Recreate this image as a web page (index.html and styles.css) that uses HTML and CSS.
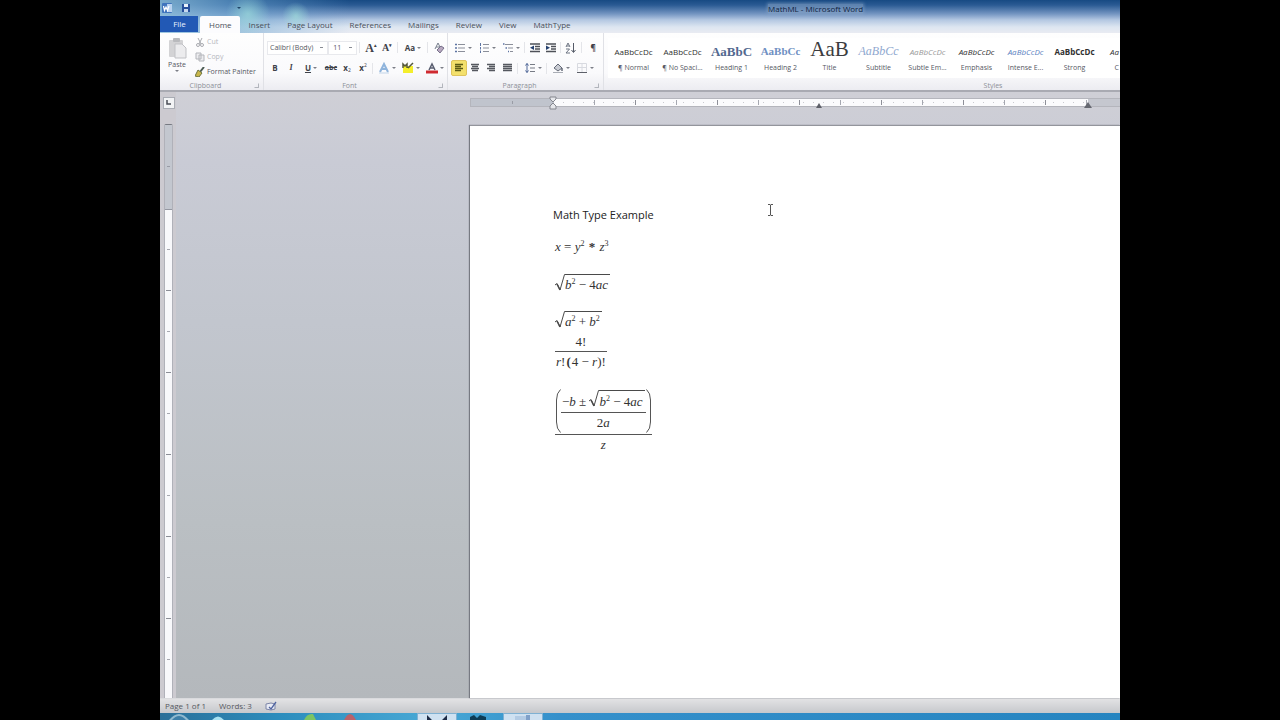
FILE: index.html
```html
<!DOCTYPE html>
<html lang="en">
<head>
<meta charset="utf-8">
<title>MathML - Microsoft Word</title>
<link rel="stylesheet" href="styles.css">
</head>
<body>
<div class="app">
  <header class="chrome">
    <div class="titlebar">
      <div class="quick">
        <svg class="word-logo" viewBox="0 0 12 12" width="12" height="12"><rect x="1" y="1" width="10" height="10" rx="1" fill="#3f74bd"/><path d="M6 2h5v8H6z" fill="#b9d2f0"/><path d="M2.500 4l1 4.500L5 5l1.500 3.500L8 4" fill="none" stroke="#fff" stroke-width="1.200"/></svg>
        <button class="qbtn" aria-label="Save"><svg viewBox="0 0 12 12" width="12" height="12"><path d="M2 2h8v8H2z" fill="#264f9c"/><path d="M4 2h4v3H4z" fill="#e9f1fb"/><path d="M4 7h4v3H4z" fill="#c6d8ef"/></svg></button>
        <button class="qbtn more" aria-label="Customize Quick Access Toolbar"><i class="arrow"></i></button>
      </div>
      <h1 class="title">MathML - Microsoft Word</h1>
    </div>
    <nav class="tabs">
      <button class="tab file">File</button>
      <button class="tab active">Home</button>
      <button class="tab">Insert</button>
      <button class="tab">Page Layout</button>
      <button class="tab">References</button>
      <button class="tab">Mailings</button>
      <button class="tab">Review</button>
      <button class="tab">View</button>
      <button class="tab">MathType</button>
    </nav>
  </header>

  <section class="ribbon">
    <div class="group clipboard">
      <div class="group-body clip-body">
        <button class="paste"><svg viewBox="0 0 20 22" width="20" height="22"><rect x="2" y="3" width="14" height="17" rx="1" fill="#d3d3d5"/><rect x="6" y="1" width="7" height="4" rx="1" fill="#b9babd"/><path d="M8 7h7l4 4v10H8z" fill="#ececee" stroke="#c0c1c5"/></svg><span>Paste</span><i class="arrow"></i></button>
        <div class="clip-list">
          <button class="clip off"><svg viewBox="0 0 10 10" width="10" height="10"><path d="M3 1l3 6M7 1L4 7" stroke="#a9abb0" fill="none"/><circle cx="3" cy="8" r="1.500" fill="none" stroke="#a9abb0"/><circle cx="7" cy="8" r="1.500" fill="none" stroke="#a9abb0"/></svg>Cut</button>
          <button class="clip off"><svg viewBox="0 0 10 10" width="10" height="10"><path d="M1 1h5v6H1zM4 3h5v6H4z" fill="#ededf0" stroke="#b3b5ba"/></svg>Copy</button>
          <button class="clip"><svg viewBox="0 0 10 10" width="10" height="10"><path d="M9 0L5 5" stroke="#4b5a52" stroke-width="2"/><path d="M3 3l4 3-3 4-4-1z" fill="#c9b64a" stroke="#6d7440"/></svg>Format Painter</button>
        </div>
      </div>
      <div class="group-label"><span>Clipboard</span><button class="launcher" aria-label="Clipboard options"></button></div>
    </div>

    <div class="group font">
      <div class="group-body">
        <div class="tools">
          <select class="face" aria-label="Font"><option>Calibri (Body)</option></select>
          <select class="size" aria-label="Font size"><option>11</option></select>
          <i class="sep"></i>
          <button class="tool serif grow" aria-label="Grow font">A<sup>▴</sup></button>
          <button class="tool serif shrink" aria-label="Shrink font">A<sup>▾</sup></button>
          <i class="sep"></i>
          <button class="tool wide" aria-label="Change case"><b>Aa</b><i class="arrow"></i></button>
          <i class="sep"></i>
          <button class="tool" aria-label="Clear formatting"><svg viewBox="0 0 12 12" width="12" height="12"><path d="M2 7l3-6 3 6M3 5h4" stroke="#777e8c" fill="none"/><path d="M4 8l4-4 3 2-4 5z" fill="#b8a9c0" stroke="#77708a"/></svg></button>
        </div>
        <div class="tools">
          <button class="tool" aria-label="Bold"><b>B</b></button>
          <button class="tool serif" aria-label="Italic"><em>I</em></button>
          <button class="tool wide" aria-label="Underline"><u><b>U</b></u><i class="arrow"></i></button>
          <button class="tool" aria-label="Strikethrough"><s>abc</s></button>
          <button class="tool" aria-label="Subscript"><b>x</b><sub>2</sub></button>
          <button class="tool" aria-label="Superscript"><b>x</b><sup>2</sup></button>
          <i class="sep slim"></i>
          <button class="tool wide" aria-label="Text effects"><svg viewBox="0 0 12 12" width="12" height="12"><path d="M2 10l4-8 4 8M3.500 7h5" stroke="#8fb4dc" stroke-width="2" fill="none"/><path d="M1 11h10" stroke="#c1d4e8"/></svg><i class="arrow"></i></button>
          <button class="tool wide" aria-label="Highlight color"><svg viewBox="0 0 12 12" width="12" height="12"><path d="M1 4h10v7H1z" fill="#f4ee2c"/><path d="M1 6V2l2 2 2-2v4M6 6l5-5" stroke="#55583c" stroke-width="1.500" fill="none"/></svg><i class="arrow"></i></button>
          <button class="tool wide" aria-label="Font color"><svg viewBox="0 0 12 12" width="12" height="12"><path d="M3 8l3-6 3 6M4 6h4" stroke="#595e70" stroke-width="1.500" fill="none"/><path d="M0 8.500h12v3H0z" fill="#cf2a30"/></svg><i class="arrow"></i></button>
        </div>
      </div>
      <div class="group-label"><span>Font</span><button class="launcher" aria-label="Font options"></button></div>
    </div>

    <div class="group paragraph">
      <div class="group-body">
        <div class="tools">
          <button class="tool wide" aria-label="Bullets"><svg viewBox="0 0 12 12" width="12" height="12"><path d="M4 2.500h7M4 6h7M4 9.500h7" stroke="#8b8f9a"/><path d="M1 2.500h2M1 6h2M1 9.500h2" stroke="#5d74a3" stroke-width="1.500"/></svg><i class="arrow"></i></button>
          <button class="tool wide" aria-label="Numbering"><svg viewBox="0 0 12 12" width="12" height="12"><path d="M5 2.500h6M5 6h6M5 9.500h6" stroke="#8b8f9a"/><path d="M2.500 1v3M2.500 5v2.500M2.500 8.500V11" stroke="#5d74a3"/></svg><i class="arrow"></i></button>
          <button class="tool wide" aria-label="Multilevel list"><svg viewBox="0 0 12 12" width="12" height="12"><path d="M3 2.500h8M6 6h5M8 9.500h3" stroke="#8b8f9a"/><path d="M1 2h1.500M3.500 6H5M6 9.500h1" stroke="#5d74a3" stroke-width="1.500"/></svg><i class="arrow"></i></button>
          <i class="sep slim"></i>
          <button class="tool" aria-label="Decrease indent"><svg viewBox="0 0 12 12" width="12" height="12"><path d="M1 2h10M6 4.500h5M6 7h5M1 9.500h10" stroke="#4e5158" stroke-width="1.500"/><path d="M5 3.500v4.500L1 5.800z" fill="#25416f"/></svg></button>
          <button class="tool" aria-label="Increase indent"><svg viewBox="0 0 12 12" width="12" height="12"><path d="M1 2h10M6 4.500h5M6 7h5M1 9.500h10" stroke="#4e5158" stroke-width="1.500"/><path d="M1 3.500v4.500l4-2.200z" fill="#25416f"/></svg></button>
          <i class="sep slim"></i>
          <button class="tool" aria-label="Sort"><svg viewBox="0 0 12 12" width="12" height="12"><path d="M1 5l2-4 2 4M1.500 4h3M1 7h3.500L1 11h4" stroke="#6d7482" fill="none"/><path d="M8.500 1v9M6.500 8l2 2.500 2-2.500" stroke="#555b68" fill="none"/></svg></button>
          <i class="sep"></i>
          <button class="tool" aria-label="Show formatting marks"><b>¶</b></button>
        </div>
        <div class="tools">
          <button class="tool on" aria-label="Align left"><svg viewBox="0 0 12 12" width="12" height="12"><path d="M2 2.500h8M2 4.500h6M2 6.500h8M2 8.500h6" stroke="#5c5a14" stroke-width="1.500"/></svg></button>
          <button class="tool" aria-label="Center"><svg viewBox="0 0 12 12" width="12" height="12"><path d="M2 2.500h8M3 4.500h6M2 6.500h8M3 8.500h6" stroke="#55585f" stroke-width="1.500"/></svg></button>
          <button class="tool" aria-label="Align right"><svg viewBox="0 0 12 12" width="12" height="12"><path d="M2 2.500h8M4 4.500h6M2 6.500h8M4 8.500h6" stroke="#55585f" stroke-width="1.500"/></svg></button>
          <button class="tool" aria-label="Justify"><svg viewBox="0 0 12 12" width="12" height="12"><path d="M2 2.500h9M2 4.500h9M2 6.500h9M2 8.500h9" stroke="#55585f" stroke-width="1.500"/></svg></button>
          <i class="sep"></i>
          <button class="tool wide" aria-label="Line spacing"><svg viewBox="0 0 12 12" width="12" height="12"><path d="M6 2.500h5M6 6h5M6 9.500h5" stroke="#777b85"/><path d="M3 1.500v9M1.500 3.500l1.500-2 1.500 2M1.500 8.500l1.500 2 1.500-2" stroke="#4d6597" fill="none"/></svg><i class="arrow"></i></button>
          <i class="sep slim"></i>
          <button class="tool wide" aria-label="Shading"><svg viewBox="0 0 12 12" width="12" height="12"><path d="M2 6l4-4 4 4-4 3z" fill="#c9ccd3" stroke="#666b78"/><path d="M10 6v3" stroke="#666b78" stroke-width="1.500"/><path d="M1 10.500h10" stroke="#a9adb5"/></svg><i class="arrow"></i></button>
          <button class="tool wide" aria-label="Borders"><svg viewBox="0 0 12 12" width="12" height="12"><path d="M1.500 1.500h9v8M1.500 1.500v8M6 2v8M2 5.500h8" stroke="#d8dae0" fill="none"/><path d="M1 10.500h10" stroke="#5d6069"/></svg><i class="arrow"></i></button>
        </div>
      </div>
      <div class="group-label"><span>Paragraph</span><button class="launcher" aria-label="Paragraph options"></button></div>
    </div>

    <div class="group styles">
      <div class="gallery">
        <button class="style"><span class="sample">AaBbCcDc</span><span class="name">¶ Normal</span></button>
        <button class="style"><span class="sample">AaBbCcDc</span><span class="name">¶ No Spaci...</span></button>
        <button class="style"><span class="sample h1">AaBbC</span><span class="name">Heading 1</span></button>
        <button class="style"><span class="sample h2">AaBbCc</span><span class="name">Heading 2</span></button>
        <button class="style"><span class="sample big">AaB</span><span class="name">Title</span></button>
        <button class="style"><span class="sample sub">AaBbCc</span><span class="name">Subtitle</span></button>
        <button class="style"><span class="sample subtle">AaBbCcDc</span><span class="name">Subtle Em...</span></button>
        <button class="style"><span class="sample emph">AaBbCcDc</span><span class="name">Emphasis</span></button>
        <button class="style"><span class="sample intense">AaBbCcDc</span><span class="name">Intense E...</span></button>
        <button class="style"><span class="sample strong">AaBbCcDc</span><span class="name">Strong</span></button>
        <button class="style last"><span class="sample emph">Aa</span><span class="name">C</span></button>
      </div>
      <div class="group-label"><span>Styles</span></div>
    </div>
  </section>

  <main class="workspace">
    <div class="side">
      <button class="tabstop" aria-label="Tab selector"><svg viewBox="0 0 8 8" width="8" height="8"><path d="M2 1v4h4" stroke="#4a4d55" stroke-width="1.500" fill="none"/></svg></button>
      <div class="vruler"><div class="vmargin"></div><div class="vbody"></div></div>
    </div>
    <div class="canvas">
      <div class="hruler">
        <div class="hmargin"></div>
        <div class="hbody">
          <svg class="marker indent" viewBox="0 0 8 14" width="8" height="14"><path d="M1 1h6v2L4 6 1 3zM4 7l3 3v3H1v-3z" fill="#e6e7eb" stroke="#85878f"/></svg>
          <svg class="marker stop" viewBox="0 0 6 5" width="6" height="5"><path d="M3 0l3 5H0z" fill="#5d5f68"/></svg>
          <svg class="marker right" viewBox="0 0 8 6" width="8" height="6"><path d="M4 0l4 6H0z" fill="#666871"/></svg>
        </div>
        <div class="hrest"></div>
      </div>
      <article class="page">
        <p class="intro">Math Type Example</p>
        <div class="math eq-plain"><i>x</i> = <i>y</i><sup>2</sup> <span class="op">*</span> <i>z</i><sup>3</sup></div>
        <div class="math eq-root"><span class="root"><svg viewBox="0 0 10 18" width="10" height="18"><path d="M0 11l2-1.500L5 16 9.500 .5H10" fill="none" stroke="#4a4a4a"/><path d="M2 10l3 6" stroke="#4a4a4a" stroke-width="1.500"/></svg><span class="radicand"><i>b</i><sup>2</sup> − 4<i>ac</i></span></span></div>
        <div class="math eq-root"><span class="root"><svg viewBox="0 0 10 18" width="10" height="18"><path d="M0 11l2-1.500L5 16 9.500 .5H10" fill="none" stroke="#4a4a4a"/><path d="M2 10l3 6" stroke="#4a4a4a" stroke-width="1.500"/></svg><span class="radicand"><i>a</i><sup>2</sup> + <i>b</i><sup>2</sup></span></span></div>
        <div class="math eq-frac"><span class="frac"><span class="num">4!</span><span class="den"><i>r</i>!<span class="op">(</span>4 − <i>r</i>)!</span></span></div>
        <div class="math eq-big"><span class="frac"><span class="paren"><svg viewBox="0 0 6 44" width="6" height="44"><path d="M5.500 .5Q1.500 4 1.500 11V33Q1.500 40 5.500 43.500" fill="none" stroke="#555"/></svg><span class="frac inner"><span class="num">−<i>b</i> ± <span class="root"><svg viewBox="0 0 10 18" width="10" height="18"><path d="M0 11l2-1.500L5 16 9.500 .5H10" fill="none" stroke="#4a4a4a"/><path d="M2 10l3 6" stroke="#4a4a4a" stroke-width="1.500"/></svg><span class="radicand"><i>b</i><sup>2</sup> − 4<i>ac</i></span></span></span><span class="den">2<i>a</i></span></span><svg viewBox="0 0 6 44" width="6" height="44"><path d="M.5 .5Q4.500 4 4.500 11V33Q4.500 40 .5 43.500" fill="none" stroke="#555"/></svg></span><span class="den"><i>z</i></span></span></div>
        <svg class="ibeam" viewBox="0 0 7 12" width="7" height="12"><path d="M1 .5h2l.5.5.5-.5h2M3.500 1v10M1 11.500h2l.5-.5.5.5h2" fill="none" stroke="#555"/></svg>
      </article>
    </div>
  </main>

  <footer class="status">
    <span class="cell">Page 1 of 1</span>
    <span class="cell">Words: 3</span>
    <svg viewBox="0 0 12 10" width="12" height="10"><path d="M1 3l5-1 4 1v5L6 9 1 8z" fill="#e8ebf5" stroke="#7d86a8"/><path d="M4 6l2 2 5-7" stroke="#5064a0" stroke-width="1.300" fill="none"/></svg>
  </footer>
  <div class="taskbar">
    <svg class="orb" viewBox="0 0 22 7" width="22" height="7"><path d="M1 7Q11-5 21 7z" fill="#8fb9cf"/><path d="M4 7Q11-1 18 7z" fill="#3d7fa8"/></svg>
    <svg class="t-ie" viewBox="0 0 12 7" width="12" height="7"><path d="M0 7q6-7 12 0z" fill="#a9e2f2"/></svg>
    <svg class="t-green" viewBox="0 0 12 7" width="12" height="7"><path d="M0 7q3-7 9-6l3 6z" fill="#7cc464"/></svg>
    <svg class="t-red" viewBox="0 0 12 7" width="12" height="7"><path d="M0 7q6-12 12 0z" fill="#b9626a"/></svg>
    <button class="task first" aria-label="Application window"><svg viewBox="0 0 20 6" width="20" height="6"><path d="M0 1l5 5H0zM20 1l-5 5h5z" fill="#1c2a45"/></svg></button>
    <svg class="t-dark" viewBox="0 0 16 7" width="16" height="7"><path d="M0 7V4l4-2 3 3 3-3 6 2v3z" fill="#0d3c55"/></svg>
    <button class="task" aria-label="Word window"><svg viewBox="0 0 20 6" width="20" height="6"><path d="M2 2h15v4H2z" fill="#b3cbe4"/><path d="M13 1h4v5h-4z" fill="#7fa0c9"/></svg></button>
  </div>
</div>
</body>
</html>
```
FILE: styles.css
```css
* { box-sizing: border-box; }
body {
  margin: 0;
  padding: 0 12.5%;
  background: #000;
  font: 7px/10px "Open Sans", "Noto Sans", sans-serif;
  color: #55585f;
}
button, select { font: inherit; color: inherit; background: none; border: 0; margin: 0; padding: 0; }
svg { display: block; flex: none; }
.app { display: flex; flex-direction: column; height: 100vh; overflow: hidden; background: #c8cad1; }

.chrome {
  flex: none;
  background:
    radial-gradient(circle at 88px 14px, #9fe0dcaa 0, #9fe0dc00 22px),
    radial-gradient(circle at 136px 16px, #a5e6dc99 0, #a5e6dc00 14px),
    linear-gradient(90deg, #8fc0dccc 0, #6ba3d099 70px, #6ba3d000 190px),
    linear-gradient(#174a83 0, #2a5a93 5px, #7596c2 14px, #b4c8e2 20px, #dde6f1 27px, #e9ebf2 33px);
}
.titlebar { display: flex; align-items: center; height: 16px; }
.quick { display: flex; align-items: center; width: 90px; gap: 7px; padding-left: 1px; }
.qbtn { display: flex; }
.more { margin-left: 38px; }
.more .arrow { border-top-color: #1f4468; }
.title {
  margin: 0 0 0 518px;
  font-size: 8px;
  line-height: 9px;
  font-weight: 400;
  color: #10233f;
  background: #8ba6c988;
  box-shadow: 0 0 3px 1px #8ba6c988;
  white-space: nowrap;
}
.arrow { display: inline-block; flex: none; border: 2px solid transparent; border-top-color: #7c7f87; border-bottom: 0; }

.tabs { display: flex; height: 17px; }
.tab { padding: 0 8px 0 9px; font-size: 8px; color: #4a4f5a; white-space: nowrap; }
.file { background: #2259b5; color: #e7f0ff; width: 38px; margin: 0 2px 1px 0; }
.active { background: #fcfcfe; border-radius: 2px 2px 0 0; }

.ribbon {
  display: flex;
  flex: none;
  height: 59px;
  background: linear-gradient(#fefefe 0, #fafafc 40px, #ececf1 57px);
  border-bottom: 2px solid #a9aab2;
}
.group { display: flex; flex-direction: column; flex: none; border-right: 1px solid #e0e1e6; padding: 4px 0 0 3px; }
.group-body { height: 44px; }
.clipboard { width: 104px; }
.font { width: 184px; }
.paragraph { width: 156px; }
.styles { flex: 1; min-width: 0; border: 0; padding-left: 4px; }
.group-label { display: flex; align-items: center; color: #8d9098; height: 9px; }
.group-label span { flex: 1; text-align: center; padding-right: 6px; }
.styles .group-label span { padding: 0 0 0 258px; }
.launcher { width: 5px; height: 5px; margin-right: 4px; border: 1px solid #b2b5bc; border-top-color: transparent; border-left-color: transparent; }

.clip-body { display: flex; gap: 4px; }
.paste { display: flex; flex-direction: column; align-items: center; justify-content: flex-start; width: 28px; }
.paste span { margin-top: 1px; }
.clip-list { display: flex; flex-direction: column; align-items: flex-start; gap: 5px; }
.clip { display: flex; align-items: center; gap: 2px; height: 10px; white-space: nowrap; }
.off { color: #b6b8bd; }

.tools { display: flex; align-items: center; height: 20px; }
.group-body .tools:first-child { height: 21px; }
.tool { display: flex; align-items: center; justify-content: center; width: 16px; height: 16px; flex: none; font-size: 8px; color: #3f4249; }
.tool.wide { width: 24px; gap: 2px; }
.tool.on { background: #f3e06c; border: 1px solid #dfc45c; border-radius: 2px; }
.tool.serif { font-family: "Liberation Serif", serif; font-weight: 700; }
.tool sup, .tool sub { font-size: 5px; line-height: 5px; }
.tool sup { align-self: flex-start; margin-top: 3px; }
.tool sub { align-self: flex-end; margin-bottom: 3px; }
.tool s { font-size: 7px; font-weight: 700; }
.tool.grow { font-size: 12px; }
.tool.shrink { font-size: 10px; }
.sep { flex: none; width: 1px; height: 11px; margin: 0 3px 0 2px; background: #e4e5e9; }
.sep.slim { margin: 0 2px 0 1px; }
.face, .size {
  appearance: none;
  height: 14px;
  padding: 0 2px;
  border: 1px solid #e8e9ed;
  background: linear-gradient(#888b93, #888b93) right 4px center / 3px 1px no-repeat #fff;
}
.face { width: 65px; }
.size { width: 30px; padding-left: 4px; }

.gallery { display: flex; height: 40px; margin: 1px 0 3px; padding-left: 1px; background: #fff; overflow: hidden; }
.style { display: flex; flex-direction: column; flex: none; align-items: center; justify-content: flex-start; width: 49px; white-space: nowrap; overflow: hidden; }
.style.last { flex: 1; width: auto; align-items: flex-end; padding-right: 1px; }
.sample { height: 24px; font: 8px/27px "Open Sans", sans-serif; color: #303030; }
.name { line-height: 11px; }
.h1 { font: 700 13px/27px "Liberation Serif", serif; color: #52698f; }
.h2 { font: 700 11px/27px "Liberation Serif", serif; color: #6f8fc2; }
.big { font: 21px/22px "Liberation Serif", serif; color: #3c3c40; }
.sub { font: italic 12px/27px "Liberation Serif", serif; color: #8fa8cf; }
.subtle { font-style: italic; color: #999; }
.emph { font-style: italic; }
.intense { font-style: italic; color: #5b82bf; }
.strong { font-weight: 700; }

.workspace { display: flex; flex: 1; min-height: 0; }
.side { display: flex; flex-direction: column; width: 16px; flex: none; background: #cccad0; }
.tabstop { display: grid; place-items: center; width: 12px; height: 12px; margin: 5px 2px 15px 3px; background: #f2f3f5; border: 1px solid #a9acb4; }
.vruler { display: flex; flex-direction: column; flex: 1; width: 9px; margin-left: 4px; border: 1px solid #b0b1b9; border-top-color: #777a82; border-bottom: 0; border-radius: 2px 2px 0 0; }
.vmargin { height: 85px; border-bottom: 1px solid #9598a2; background: linear-gradient(#989ba5, #989ba5) center 41px / 3px 1px no-repeat #c3c7cf; }
.vbody {
  flex: 1;
  background:
    linear-gradient(transparent 80px, #8b8d96 80px, #8b8d96 81px, transparent 81px) center top / 5px 82px repeat-y,
    linear-gradient(transparent 39px, #a7a8b0 39px, #a7a8b0 40px, transparent 40px) center top / 3px 82px repeat-y,
    #f8f8fb;
}
.canvas {
  flex: 1;
  min-width: 0;
  display: flex;
  flex-direction: column;
  padding-left: 294px;
  background: linear-gradient(#cfcfd6 0, #c9cbd5 70px, #c2c6ce 230px, #babfc3 430px, #b4b8bc 100%);
}
.hruler { display: flex; flex: none; height: 9px; margin: 6px 0 18px; border: 1px solid #b4b5bc; border-right: 0; }
.hmargin { width: 83px; background: linear-gradient(#999ca5, #999ca5) 41px center / 1px 3px no-repeat #c0c4cd; }
.hbody {
  position: relative;
  flex: 1;
  background:
    linear-gradient(90deg, transparent 81px, #8d8f98 81px) left center / 82px 5px repeat-x,
    linear-gradient(90deg, transparent 40px, #a5a7b0 40px, #a5a7b0 41px, transparent 41px) left center / 82px 5px repeat-x,
    linear-gradient(90deg, transparent 9px, #c9cad0 9px) left center / 10px 1px repeat-x,
    #fbfbfd;
}
.hrest { width: 32px; background: #c5c7cf; }
.marker { position: absolute; }
.indent { left: -5px; top: -3px; }
.stop { left: 49%; top: 4px; }
.right { right: -4px; top: 3px; }

.page {
  position: relative;
  flex: 1;
  padding: 82px 83px 0;
  background: #fff;
  border-top: 1px solid #93959c;
  box-shadow: -1px 0 1px #777a82;
  color: #333;
}
.intro { margin: 0 0 17px; font-size: 11px; line-height: 14px; color: #222; }
.math { padding-left: 2px; font: 13px/16px "Liberation Serif", serif; color: #333; white-space: nowrap; }
.math sup { font-size: 8px; line-height: 8px; vertical-align: 5px; }
.op { padding: 0 1px; font-weight: 700; }
.eq-plain { height: 16px; }
.eq-root { height: 18px; margin-top: 19px; }
.root { display: inline-flex; vertical-align: top; }
.radicand { height: 18px; padding-right: 2px; line-height: 19px; border-top: 1px solid #4a4a4a; }
.frac { display: inline-flex; flex-direction: column; vertical-align: top; }
.num, .den { display: block; text-align: center; line-height: 17px; }
.num { line-height: 16px; height: 17px; }
.den { padding: 0 1px; line-height: 19px; height: 18px; border-top: 1px solid #555; }
.eq-frac { margin-top: 5px; }
.eq-big { margin-top: 20px; }
.paren { display: flex; padding-bottom: 1px; }
.inner { padding-top: 1px; }
.inner .num { height: 22px; line-height: 24px; padding: 0 1px; }
.inner .radicand { line-height: 21px; }
.ibeam { position: absolute; left: 297px; top: 78px; }

.status { display: flex; flex: none; align-items: center; gap: 13px; height: 15px; padding-left: 5px; font-size: 8px; background: linear-gradient(#e2e2e4, #c6c8cc); border-top: 1px solid #d9dadd; white-space: nowrap; }
.taskbar { display: flex; flex: none; align-items: flex-end; height: 7px; overflow: hidden; background: linear-gradient(90deg, #2b6f98, #2c8dbd 120px, #48a8d5 270px, #3590cb 400px, #2584c0); }
.orb { margin-left: 8px; }
.t-ie { margin-left: 22px; }
.t-green { margin-left: 80px; }
.t-red { margin-left: 28px; }
.t-dark { margin-left: 13px; }
.task { display: grid; place-items: end center; width: 40px; height: 7px; margin-left: 17px; background: #cfe1f1; border: 1px solid #7fb1d3; border-bottom: 0; }
.task.first { margin-left: 61px; }
```
